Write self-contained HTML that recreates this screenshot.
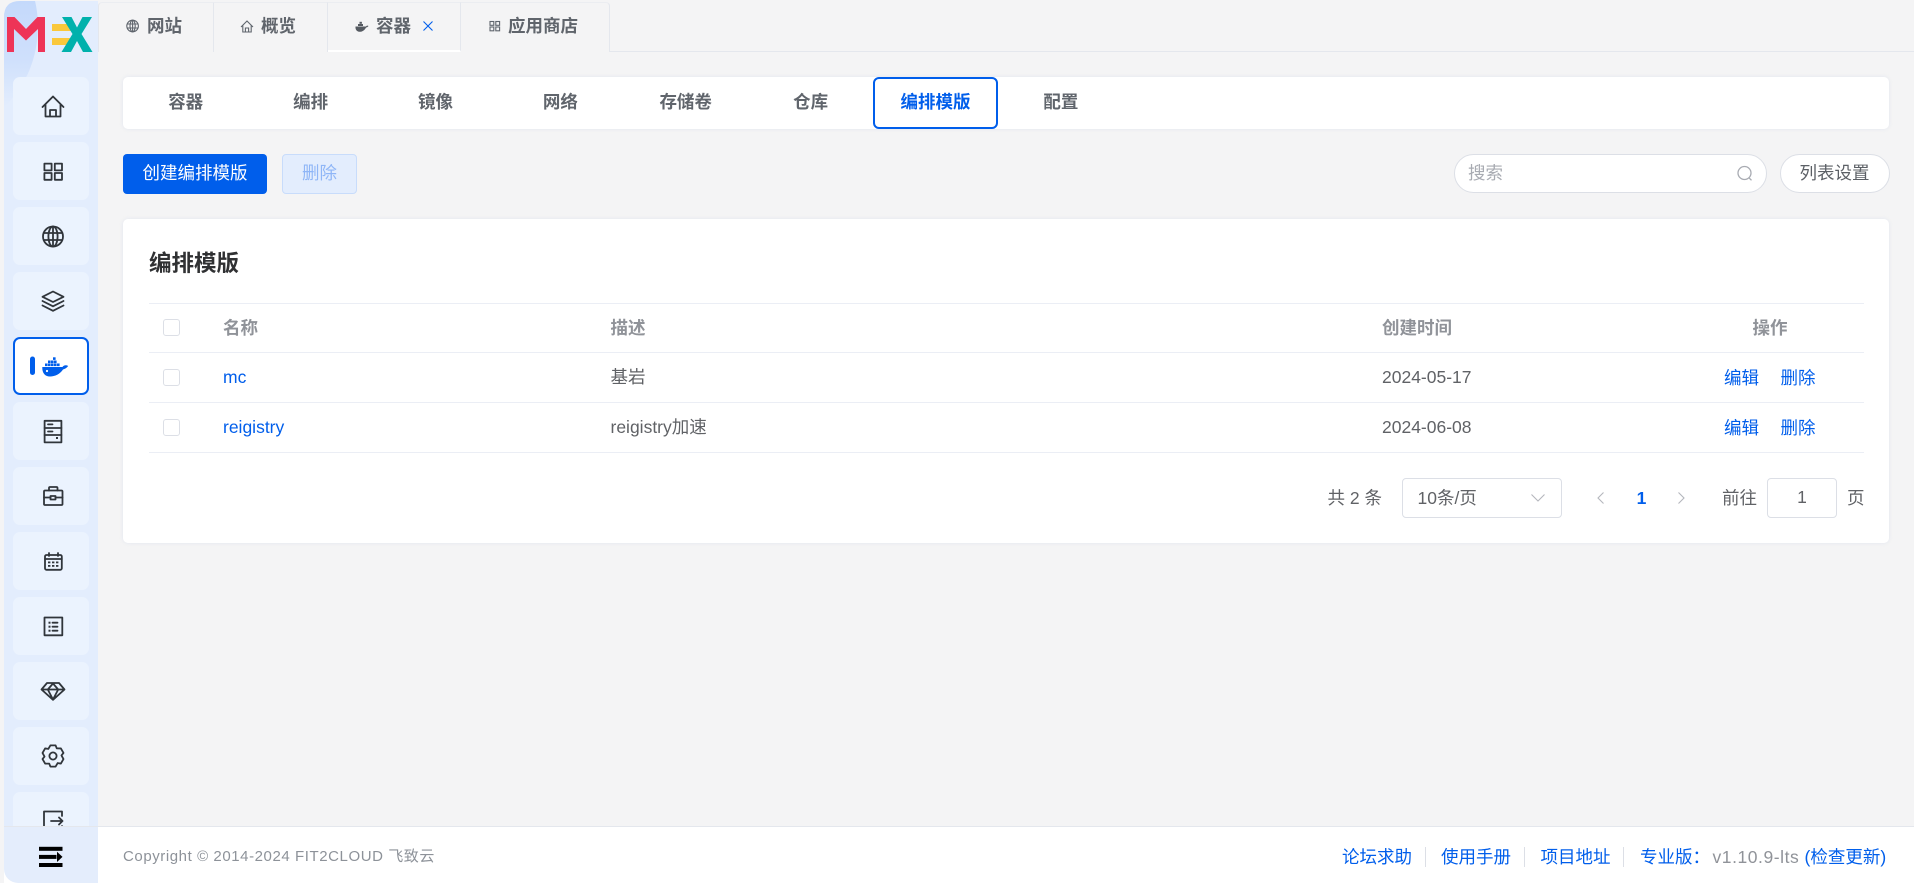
<!DOCTYPE html>
<html lang="zh-CN">
<head>
<meta charset="utf-8">
<title>编排模版</title>
<style>
*{box-sizing:border-box}
html,body{margin:0;padding:0;width:1914px;height:883px;overflow:hidden;background:#f4f4f5;font-family:"Liberation Sans","Noto Sans CJK SC",sans-serif;font-size:17.5px;color:#606266}
.a{position:absolute}
.t{position:absolute;white-space:nowrap;line-height:30px;height:30px}
.c{transform:translateX(-50%)}
.side{left:4px;top:1px;width:94px;height:882px;background:#e3edfd;border-radius:16px 0 0 14px;overflow:hidden}
.item{position:absolute;left:13px;width:76px;height:58px;background:#ebf3fe;border-radius:7px}
.item.on{background:#fff;border:2px solid #005eeb}
.tab{position:absolute;top:2px;height:50px;background:#f4f4f5;border-right:1px solid #e4e7ed;border-top:1px solid #ebedf1}
.tabline{left:98px;top:51px;width:1816px;height:1px;background:#e4e7ed}
.b{font-weight:700}
.card{background:#fff;border-radius:5px;box-shadow:0 0 3px rgba(210,218,235,.5)}
.line{left:149px;width:1715px;height:1.3px;background:#ebeef5}
.cb{left:163px;width:17px;height:17px;border:1.3px solid #dcdfe6;border-radius:3px;background:#fff}
.lnk{color:#005eeb}
.sep{top:847px;width:1px;height:20px;background:#dcdfe6}
.box{background:#fff;border:1.3px solid #dcdfe6}
</style>
</head>
<body>

<div class="a side"></div>
<svg class="a" style="left:0;top:0" width="98" height="120" viewBox="0 0 98 120"><defs><linearGradient id="bl" x1="0" y1="0" x2="0" y2="1"><stop offset="0" stop-color="#c4d9fb"/><stop offset=".55" stop-color="#cfe0fc"/><stop offset="1" stop-color="#e3edfd"/></linearGradient></defs><path d="M4 17 Q4 1 20 1 H35 C42 30 38 75 4 107 Z" fill="url(#bl)"/></svg>

<div class="item" style="top:77px"></div>
<div class="item" style="top:142px"></div>
<div class="item" style="top:207px"></div>
<div class="item" style="top:272px"></div>
<div class="item on" style="top:337px"></div>
<div class="item" style="top:402px"></div>
<div class="item" style="top:467px"></div>
<div class="item" style="top:532px"></div>
<div class="item" style="top:597px"></div>
<div class="item" style="top:662px"></div>
<div class="item" style="top:727px"></div>
<div class="item" style="top:792px"></div>

<svg class="a" style="left:0;top:0;z-index:2" width="98" height="827" viewBox="0 0 98 827">
<!-- logo -->
<path d="M7 52V17H14.500L26 29L37.500 17H45V52H38V29L26 40.500L14 29V52Z" fill="#ee3457"/>
<rect x="52" y="24" width="22" height="7" fill="#fac83c"/>
<rect x="52" y="38" width="22" height="7" fill="#fac83c"/>
<path d="M62 17H71.500L77 27.500L82.500 17H92L81.500 34L92.500 52H83L77 41L71 52H61.500L72.500 34Z" fill="#00b1ac"/>
<g fill="none" stroke="#30353b" stroke-width="1.800" stroke-linejoin="round" stroke-linecap="round">
<!-- home -->
<path d="M42.500 107L53 96.500L63.500 107M45.500 104.500V116.500H60.500V104.500M50 116.500V110H56V116.500"/>
<!-- grid -->
<rect x="44.400" y="163.600" width="7.200" height="6.800"/><rect x="54.800" y="163.600" width="7.200" height="6.800"/><rect x="44.400" y="173" width="7.200" height="6.800"/><rect x="54.800" y="173" width="7.200" height="6.800"/>
<!-- globe -->
<circle cx="53" cy="236.500" r="10"/><ellipse cx="53" cy="236.500" rx="4.600" ry="10"/><path d="M53 226.500V246.500M43.800 233H62.200M43.800 240H62.200"/>
<!-- layers -->
<path d="M53 291.500L63.500 296.800L53 302L42.500 296.800ZM42.500 301L53 306.300L63.500 301M42.500 305.500L53 310.800L63.500 305.500"/>
<!-- server -->
<rect x="44.600" y="420.800" width="16.800" height="21.600"/><path d="M44.600 428H61.400M44.600 435H61.400M48 424.400H52.500M48 431.500H52.500"/>
<!-- toolbox -->
<rect x="44" y="490.500" width="18.500" height="14.500" rx="1"/><path d="M49 490.500V488A1 1 0 0 1 50 487H56.500A1 1 0 0 1 57.500 488V490.500M44 497.500H50.500M55.500 497.500H62.500"/><rect x="50.500" y="496" width="5" height="3.500"/>
<!-- calendar -->
<rect x="45" y="555" width="16.800" height="14.800" rx="1.500"/><path d="M45 559H61.800M49 553V556M58 553V556"/>
<!-- list -->
<rect x="44.500" y="617.500" width="17.800" height="17.800"/><path d="M52.500 622.700H57.500M52.500 626.700H57.500M52.500 630.700H57.500"/>
<!-- diamond -->
<path d="M47 683H59L64.500 689.500L53 699.800L41.500 689.500ZM42 689.500H64M47.800 689.500L53 683.500L58.200 689.500L53 699.500Z"/>
<!-- gear -->
<g transform="translate(53 756)"><path d="M-2.600-10.600L2.600-10.600L3.800-7.600L7.880-7.550L10.480-3.050L8.480-.51L10.480 3.050L7.880 7.550L4.680 7.090L2.600 10.600L-2.600 10.600L-3.800 7.600L-7.880 7.550L-10.480 3.050L-8.480 .51L-10.480-3.050L-7.880-7.550L-4.680-7.090Z"/><circle r="3.600"/></g>
<!-- exit -->
<path d="M62 816V811.500H44V832H62V826M51 821H62.500M59 817.500L62.500 821L59 824.500"/>
</g>
<g fill="#30353b">
<rect x="48.500" y="621.700" width="2" height="2"/><rect x="48.500" y="625.700" width="2" height="2"/><rect x="48.500" y="629.700" width="2" height="2"/>
<rect x="56" y="437" width="2" height="2"/>
<rect x="48" y="561.500" width="2.400" height="1.800"/><rect x="52" y="561.500" width="2.400" height="1.800"/><rect x="56" y="561.500" width="2.400" height="1.800"/>
<rect x="48" y="565" width="2.400" height="1.800"/><rect x="52" y="565" width="2.400" height="1.800"/><rect x="56" y="565" width="2.400" height="1.800"/>
</g>
<!-- docker active -->
<rect x="30" y="356.500" width="5" height="18.500" rx="2.500" fill="#005eeb"/>
<g fill="#005eeb">
<path d="M42.300 367H62.500C63.500 365.300 66 364.700 68.200 366C66.500 368 64.800 369 63 369.500C60 374 55 376.500 50 376.500C45 376.500 42 373 42.300 367Z"/>
<rect x="45" y="363.500" width="2.600" height="2.600"/><rect x="48" y="363.500" width="2.600" height="2.600"/><rect x="51" y="363.500" width="2.600" height="2.600"/><rect x="54" y="363.500" width="2.600" height="2.600"/><rect x="57" y="363.500" width="2.600" height="2.600"/>
<rect x="48" y="360.500" width="2.600" height="2.600"/><rect x="51" y="360.500" width="2.600" height="2.600"/><rect x="54" y="360.500" width="2.600" height="2.600"/>
<rect x="53" y="357.300" width="2.600" height="2.600"/>
</g>
<circle cx="47" cy="371" r="1.100" fill="#fff"/>
</svg>

<!-- top tabs -->
<div class="a tabline"></div>
<div class="tab" style="left:98px;width:116px;border-left:1px solid #e4e7ed;border-top-left-radius:4px"></div>
<div class="tab" style="left:214px;width:114px"></div>
<div class="tab" style="left:328px;width:133px;border-bottom:2px solid #fff"></div>
<div class="tab" style="left:461px;width:149px;border-top-right-radius:4px"></div>
<svg class="a" style="left:98px;top:0;z-index:2" width="520" height="52" viewBox="98 0 520 52">
<g fill="none" stroke="#5f656d" stroke-width="1.100">
<circle cx="132.600" cy="26" r="5.800"/><ellipse cx="132.600" cy="26" rx="2.600" ry="5.800"/><path d="M132.600 20.200V31.800M127.300 24H137.900M127.300 28H137.900"/>
<path d="M241 27L247 21L253 27M242.800 25.500V32H251.200V25.500M245.400 32V28H248.600V32"/>
<rect x="490" y="21.500" width="3.800" height="3.800"/><rect x="495.800" y="21.500" width="3.800" height="3.800"/><rect x="490" y="27" width="3.800" height="3.800"/><rect x="495.800" y="27" width="3.800" height="3.800"/>
</g>
<path d="M423.500 21.500L432.500 30.500M432.500 21.500L423.500 30.500" stroke="#005eeb" stroke-width="1.100" fill="none"/>
<g fill="#555a61">
<path d="M355.500 26.500H366C366.500 25.600 367.800 25.300 368.500 26C367.800 27 366.800 27.400 366 27.600C364.500 30.500 362 31.800 359.800 31.800C357 31.800 355.200 29.800 355.500 26.500Z"/>
<rect x="358" y="24" width="5" height="2"/><rect x="359.500" y="21.800" width="2.400" height="2"/>
</g>
</svg>
<div class="t b" style="left:147px;top:11px;color:#60656c;z-index:2">网站</div>
<div class="t b" style="left:261px;top:11px;color:#60656c;z-index:2">概览</div>
<div class="t b" style="left:376px;top:11px;color:#60656c;z-index:2">容器</div>
<div class="t b" style="left:508px;top:11px;color:#60656c;z-index:2">应用商店</div>

<!-- sub tabs -->
<div class="a card" style="left:123px;top:77px;width:1766px;height:52px"></div>
<div class="a" style="left:873px;top:77px;width:125px;height:52px;border:2px solid #005eeb;border-radius:6px;background:#fff"></div>
<div class="t b c" style="left:185.700px;top:87px;color:#60656c">容器</div>
<div class="t b c" style="left:310.600px;top:87px;color:#60656c">编排</div>
<div class="t b c" style="left:435.500px;top:87px;color:#60656c">镜像</div>
<div class="t b c" style="left:560.400px;top:87px;color:#60656c">网络</div>
<div class="t b c" style="left:685.700px;top:87px;color:#60656c">存储卷</div>
<div class="t b c" style="left:810.600px;top:87px;color:#60656c">仓库</div>
<div class="t b c" style="left:935.500px;top:87px;color:#005eeb">编排模版</div>
<div class="t b c" style="left:1060.900px;top:87px;color:#60656c">配置</div>

<!-- toolbar -->
<div class="a" style="left:123px;top:154px;width:144px;height:40px;background:#005eeb;border-radius:4px"></div>
<div class="t c" style="left:195px;top:158px;color:#fff">创建编排模版</div>
<div class="a" style="left:282px;top:154px;width:75px;height:40px;background:#e3edfd;border:1.300px solid #c8dcfb;border-radius:4px"></div>
<div class="t c" style="left:319.500px;top:158px;color:#8fb6f7">删除</div>
<div class="a box" style="left:1454px;top:154px;width:313px;height:39px;border-radius:20px"></div>
<div class="t" style="left:1468px;top:158px;color:#a8abb2">搜索</div>
<svg class="a" style="left:1735px;top:164px" width="20" height="20" viewBox="0 0 20 20" fill="none" stroke="#a8abb2" stroke-width="1.300"><circle cx="9.500" cy="9" r="6.500"/><path d="M14 13.800L16.500 16.300"/></svg>
<div class="a box" style="left:1779.500px;top:154px;width:110px;height:39px;border-radius:20px"></div>
<div class="t c" style="left:1834.500px;top:158px;color:#5c6066">列表设置</div>

<!-- main card -->
<div class="a card" style="left:123px;top:219px;width:1766px;height:324px"></div>
<div class="a" style="left:149px;top:248.500px;font-size:22.500px;line-height:30px;white-space:nowrap;font-weight:600;color:#303133">编排模版</div>

<div class="a line" style="top:303px"></div>
<div class="a line" style="top:352px"></div>
<div class="a line" style="top:402px"></div>
<div class="a line" style="top:452px"></div>

<div class="a cb" style="top:319px"></div>
<div class="a cb" style="top:369px"></div>
<div class="a cb" style="top:419px"></div>

<div class="t b" style="left:223px;top:313px;color:#909399">名称</div>
<div class="t b" style="left:610.500px;top:313px;color:#909399">描述</div>
<div class="t b" style="left:1382px;top:313px;color:#909399">创建时间</div>
<div class="t b c" style="left:1770px;top:313px;color:#909399">操作</div>

<div class="t lnk" style="left:223px;top:362px">mc</div>
<div class="t" style="left:610.500px;top:362px">基岩</div>
<div class="t" style="left:1382px;top:362px">2024-05-17</div>
<div class="t lnk" style="left:1724px;top:363px">编辑</div>
<div class="t lnk" style="left:1780.500px;top:363px">删除</div>

<div class="t lnk" style="left:223px;top:412px">reigistry</div>
<div class="t" style="left:610.500px;top:412px">reigistry加速</div>
<div class="t" style="left:1382px;top:412px">2024-06-08</div>
<div class="t lnk" style="left:1724px;top:413px">编辑</div>
<div class="t lnk" style="left:1780.500px;top:413px">删除</div>

<!-- pagination -->
<div class="t" style="left:1327.500px;top:483px">共 2 条</div>
<div class="a box" style="left:1402px;top:478px;width:160px;height:40px;border-radius:4px"></div>
<div class="t" style="left:1417.500px;top:483px">10条/页</div>
<svg class="a" style="left:1530px;top:492px" width="16" height="12" viewBox="0 0 16 12" fill="none" stroke="#b4b7bd" stroke-width="1.100"><path d="M1.500 2.500L8 9L14.500 2.500"/></svg>
<svg class="a" style="left:1596px;top:491px" width="10" height="14" viewBox="0 0 10 14" fill="none" stroke="#b4b7bd" stroke-width="1.100"><path d="M7.500 1.500L2 7L7.500 12.500"/></svg>
<div class="t b c" style="left:1641.500px;top:483px;color:#005eeb">1</div>
<svg class="a" style="left:1676px;top:491px" width="10" height="14" viewBox="0 0 10 14" fill="none" stroke="#b4b7bd" stroke-width="1.100"><path d="M2.500 1.500L8 7L2.500 12.500"/></svg>
<div class="t" style="left:1722px;top:483px">前往</div>
<div class="a box" style="left:1767px;top:478px;width:70px;height:40px;border-radius:4px"></div>
<div class="t c" style="left:1802px;top:482px">1</div>
<div class="t" style="left:1847px;top:483px">页</div>

<!-- footer -->
<div class="a" style="left:4px;top:826px;width:1910px;height:57px;background:#fff;border-top:1.300px solid #e4e7ed;z-index:3"></div>
<div class="a" style="left:4px;top:827px;width:94px;height:56px;background:#e4edfc;border-radius:0 0 0 14px;z-index:4"></div>
<svg class="a" style="left:36px;top:844px;z-index:5" width="30" height="26" viewBox="36 844 30 26" fill="#000"><rect x="39" y="846.800" width="23.500" height="4"/><rect x="39" y="854.900" width="17.500" height="4"/><path d="M57 851.800L62.500 856.900L57 862Z"/><rect x="39" y="863" width="23.500" height="4"/></svg>
<div class="t" style="left:123px;top:841.500px;font-size:15px;letter-spacing:.57px;color:#8d9299;z-index:5">Copyright © 2014-2024 FIT2CLOUD 飞致云</div>
<div class="t lnk" style="left:1342px;top:841.500px;z-index:5">论坛求助</div>
<div class="a sep" style="left:1425px;z-index:5"></div>
<div class="t lnk" style="left:1441px;top:841.500px;z-index:5">使用手册</div>
<div class="a sep" style="left:1524px;z-index:5"></div>
<div class="t lnk" style="left:1540.500px;top:841.500px;z-index:5">项目地址</div>
<div class="a sep" style="left:1623px;z-index:5"></div>
<div class="t lnk" style="left:1640px;top:841.500px;z-index:5">专业版：</div>
<div class="t" style="left:1712.500px;top:841.500px;color:#909399;letter-spacing:.55px;z-index:5">v1.10.9-lts</div>
<div class="t lnk" style="left:1804.500px;top:841.500px;z-index:5">(检查更新)</div>

</body>
</html>
